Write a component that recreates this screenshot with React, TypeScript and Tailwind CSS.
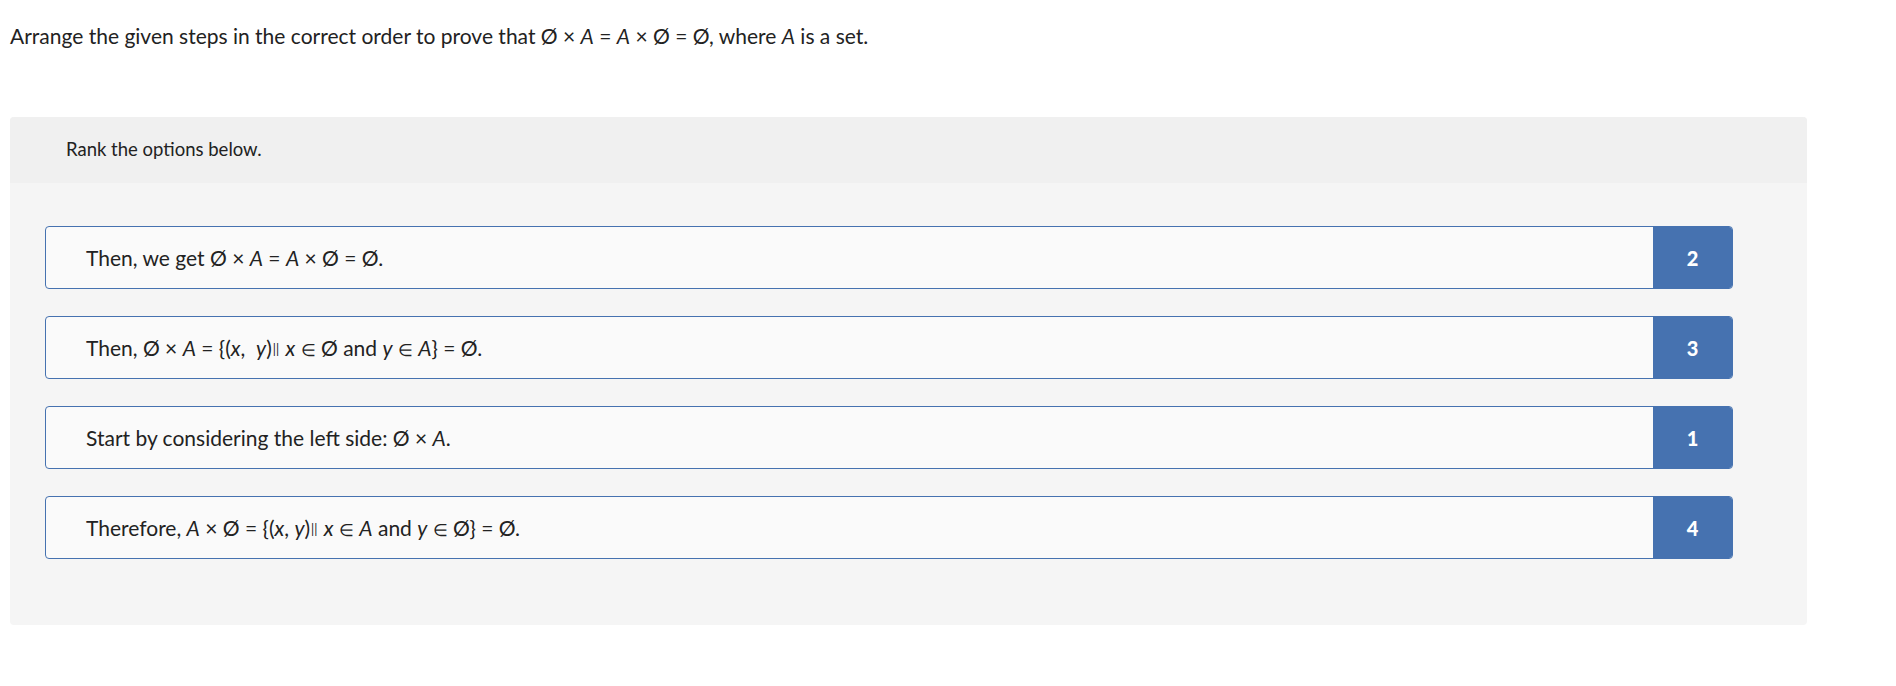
import React from 'react';

const font = { fontFamily: 'Lato, "Liberation Sans", sans-serif' };

function E() {
  return <span>Ø</span>;
}

function V({ children }: { children: React.ReactNode }) {
  return <i className="italic">{children}</i>;
}

function In() {
  return <span className="text-[0.8em]">∈</span>;
}

function Bars() {
  return <span className="text-[0.6em] align-[0.15em] mx-[1px]">||</span>;
}

const steps: { rank: number; content: React.ReactNode }[] = [
  {
    rank: 2,
    content: (
      <>
        Then, we get <E /> × <V>A</V> = <V>A</V> × <E /> = <E />.
      </>
    ),
  },
  {
    rank: 3,
    content: (
      <>
        Then, <E /> × <V>A</V> = {'{'}(<V>x</V>,&nbsp; <V>y</V>)<Bars /> <V>x</V> <In /> <E /> and <V>y</V> <In />{' '}
        <V>A</V>
        {'}'} = <E />.
      </>
    ),
  },
  {
    rank: 1,
    content: (
      <>
        Start by considering the left side: <E /> × <V>A</V>.
      </>
    ),
  },
  {
    rank: 4,
    content: (
      <>
        Therefore, <V>A</V> × <E /> = {'{'}(<V>x</V>, <V>y</V>)<Bars /> <V>x</V> <In /> <V>A</V> and <V>y</V> <In />{' '}
        <E />
        {'}'} = <E />.
      </>
    ),
  },
];

export default function App() {
  return (
    <div className="w-full h-[686px] bg-white text-[#222]" style={font}>
      <div className="px-[10px] pt-[22px] text-[21px] leading-[28px]">
        Arrange the given steps in the correct order to prove that <E /> × <V>A</V> = <V>A</V> × <E /> = <E />, where{' '}
        <V>A</V> is a set.
      </div>

      <div className="ml-[10px] mt-[67px] w-[1797px] rounded-[4px] bg-[#f5f5f5] overflow-hidden">
        <div className="flex h-[66px] items-center bg-[#f0f0f0] pl-[56px] text-[18.5px]">Rank the options below.</div>

        <div className="flex flex-col gap-[27px] pt-[43px] pb-[66px] pl-[35px] pr-[74px]">
          {steps.map((s) => (
            <div
              key={s.rank}
              className="flex h-[63px] overflow-hidden rounded-[4px] border border-[#4672b0] bg-[#fafafa]"
            >
              <div className="flex flex-1 items-center pl-[40px] text-[21px]">
                <span>{s.content}</span>
              </div>
              <div className="flex w-[79px] items-center justify-center bg-[#4672b0] text-[20px] font-black text-white">
                {s.rank}
              </div>
            </div>
          ))}
        </div>
      </div>
    </div>
  );
}
